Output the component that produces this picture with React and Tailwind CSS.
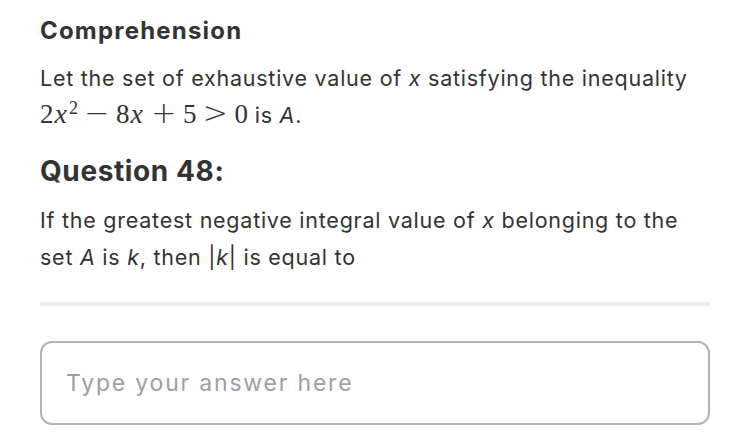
import React from 'react'

const M = ({ children }) => (
  <span className="font-['Liberation_Serif',serif] text-[27px] leading-none tracking-normal">{children}</span>
)
const V = ({ children }) => <i className="italic ml-[1px] mr-[2px] text-[28px]">{children}</i>
const Op = ({ children }) => (
  <span className="inline-block w-[38px] text-center font-['DejaVu_Sans',sans-serif] font-extralight text-[30px] leading-none">
    {children}
  </span>
)

const App = () => {
  return (
    <div className="w-[750px] h-[445px] bg-white px-10 pt-[14px] text-[#333333] font-['Inter',sans-serif] overflow-hidden">
      <h2 className="text-[24px] font-bold leading-[34px] tracking-[1.2px]">Comprehension</h2>

      <p className="mt-[12px] text-[21.5px] leading-[37px] tracking-[0.75px]">
        Let the set of exhaustive value of <i>x</i> satisfying the inequality
        <br />
        <M>
          2<V>x</V>
          <sup className="text-[18px]">2</sup>
          <Op>−</Op>8<V>x</V>
          <Op>+</Op>5<Op>&gt;</Op>0
        </M>{' '}
        is <i>A</i>.
      </p>

      <h3 className="mt-[18px] text-[28px] font-bold leading-[38px] tracking-[0.6px]">Question 48:</h3>

      <p className="mt-[12px] text-[21.5px] leading-[37px] tracking-[0.75px]">
        If the greatest negative integral value of <i>x</i> belonging to the
        <br />
        set <i>A</i> is <i>k</i>, then |<i>k</i>| is equal to
      </p>

      <div className="mt-[26px] h-1 bg-[#ebebeb]" />

      <input
        type="text"
        placeholder="Type your answer here"
        className="mt-[35px] w-full h-[84px] px-[24px] border-2 border-[#b3b3b3] rounded-xl text-[23px] tracking-[1.8px] placeholder:text-[#9aa0ab] outline-none"
      />
    </div>
  )
}

export default App
